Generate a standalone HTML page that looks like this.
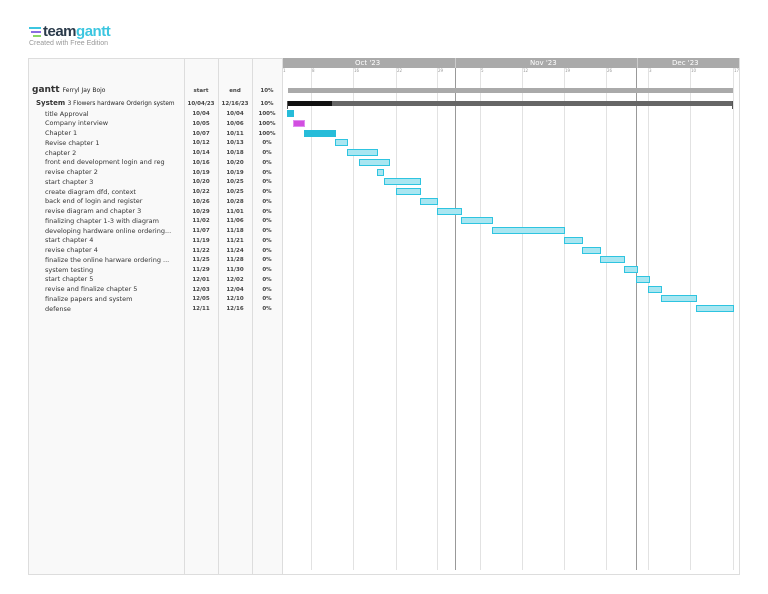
<!DOCTYPE html><html><head><style>
body{margin:0;width:768px;height:594px;background:#fff;position:relative;font-family:"DejaVu Sans","Liberation Sans",sans-serif;overflow:hidden}
.a{position:absolute}
.t{position:absolute;font-size:6.5px;color:#333;white-space:nowrap;line-height:8px}
.n{left:45px}
.c{text-align:center;font-size:5.5px;font-weight:bold;color:#444}
.b{position:absolute;height:5px;background:#a9e6f1;border:1px solid #2ec4e0}
.v{position:absolute;top:68px;height:502px;width:1px;background:#e2e2e2}
.m{background:#999}
</style></head><body>
<div class="a" style="left:29px;top:27px;width:12px;height:2px;background:#3cc6e0"></div>
<div class="a" style="left:31px;top:31px;width:10px;height:2px;background:#8a6de0"></div>
<div class="a" style="left:33px;top:35px;width:8px;height:2px;background:#8bd867"></div>
<div class="a" style="left:43px;top:23px;font-size:15px;font-weight:bold;color:#2a3a4a;font-family:'Liberation Sans',sans-serif;letter-spacing:-0.5px">team<span style="color:#3cc6e0">gantt</span></div>
<div class="a" style="left:29px;top:40px;font-size:7px;color:#999;font-family:'Liberation Sans',sans-serif">Created with Free Edition</div>
<div class="a" style="left:28px;top:58px;width:710px;height:515px;border:1px solid #ddd;background:#fff"></div>
<div class="a" style="left:29px;top:59px;width:253px;height:515px;background:#f9f9f9"></div>
<div class="a" style="left:184px;top:59px;width:1px;height:515px;background:#ddd"></div>
<div class="a" style="left:218px;top:59px;width:1px;height:515px;background:#ddd"></div>
<div class="a" style="left:252px;top:59px;width:1px;height:515px;background:#ddd"></div>
<div class="a" style="left:282px;top:59px;width:1px;height:515px;background:#ddd"></div>
<div class="a" style="left:283px;top:58px;width:456px;height:10px;background:#aaa"></div>
<div class="a" style="left:455px;top:58px;width:1px;height:10px;background:#ccc"></div>
<div class="a" style="left:637px;top:58px;width:1px;height:10px;background:#ccc"></div>
<div class="t" style="left:355px;top:59px;color:#fff;font-size:7px">Oct '23</div>
<div class="t" style="left:530px;top:59px;color:#fff;font-size:7px">Nov '23</div>
<div class="t" style="left:672px;top:59px;color:#fff;font-size:7px">Dec '23</div>
<div class="v" style="left:311px"></div><div class="v" style="left:353px"></div><div class="v" style="left:396px"></div><div class="v" style="left:437px"></div><div class="v m" style="left:455px"></div><div class="v" style="left:480px"></div><div class="v" style="left:522px"></div><div class="v" style="left:564px"></div><div class="v" style="left:606px"></div><div class="v m" style="left:636px"></div><div class="v" style="left:648px"></div><div class="v" style="left:690px"></div><div class="v" style="left:733px"></div>
<div class="t" style="left:283px;top:67px;font-size:4px;color:#999">1</div><div class="t" style="left:312px;top:67px;font-size:4px;color:#999">8</div><div class="t" style="left:354px;top:67px;font-size:4px;color:#999">16</div><div class="t" style="left:397px;top:67px;font-size:4px;color:#999">22</div><div class="t" style="left:438px;top:67px;font-size:4px;color:#999">29</div><div class="t" style="left:481px;top:67px;font-size:4px;color:#999">5</div><div class="t" style="left:523px;top:67px;font-size:4px;color:#999">12</div><div class="t" style="left:565px;top:67px;font-size:4px;color:#999">19</div><div class="t" style="left:607px;top:67px;font-size:4px;color:#999">26</div><div class="t" style="left:649px;top:67px;font-size:4px;color:#999">3</div><div class="t" style="left:691px;top:67px;font-size:4px;color:#999">10</div><div class="t" style="left:734px;top:67px;font-size:4px;color:#999">17</div>
<div class="t" style="left:32px;top:86px;font-size:9px;font-weight:bold;color:#333">gantt <span style="font-size:6px;font-weight:normal;color:#222">Ferryl Jay Bojo</span></div>
<div class="t c" style="left:184px;width:34px;top:87px">start</div><div class="t c" style="left:218px;width:34px;top:87px">end</div><div class="t c" style="left:252px;width:30px;top:87px">10%</div>
<div class="t" style="left:36px;top:99px;font-size:7px;font-weight:bold;color:#333">System <span style="font-size:5.8px;font-weight:normal;color:#222">3 Flowers hardware Orderign system</span></div>
<div class="t c" style="left:184px;width:34px;top:100px">10/04/23</div><div class="t c" style="left:218px;width:34px;top:100px">12/16/23</div><div class="t c" style="left:252px;width:30px;top:100px">10%</div>
<div class="a" style="left:288px;top:88px;width:445px;height:5px;background:#aaa"></div>
<div class="a" style="left:288px;top:101px;width:445px;height:5px;background:#666"></div>
<div class="a" style="left:288px;top:101px;width:44px;height:5px;background:#111"></div>
<div class="a" style="left:287px;top:101px;width:1px;height:8px;background:#555"></div>
<div class="a" style="left:732px;top:101px;width:1px;height:8px;background:#555"></div>
<div id="rows"></div>
<script>
var d=[["title Approval","10/04","10/04","100%",287,294,"s"],["Company interview","10/05","10/06","100%",293,305,"p"],["Chapter 1","10/07","10/11","100%",304,336,"s"],["Revise chapter 1","10/12","10/13","0%",335,348],["chapter 2","10/14","10/18","0%",347,378],["front end development login and reg","10/16","10/20","0%",359,390],["revise chapter 2","10/19","10/19","0%",377,384],["start chapter 3","10/20","10/25","0%",384,421],["create diagram dfd, context","10/22","10/25","0%",396,421],["back end of login and register","10/26","10/28","0%",420,438],["revise diagram  and chapter 3","10/29","11/01","0%",437,462],["finalizing chapter 1-3 with diagram","11/02","11/06","0%",461,493],["developing hardware online ordering...","11/07","11/18","0%",492,565],["start chapter 4","11/19","11/21","0%",564,583],["revise chapter 4","11/22","11/24","0%",582,601],["finalize the online harware ordering ...","11/25","11/28","0%",600,625],["system testing","11/29","11/30","0%",624,638],["start chapter 5","12/01","12/02","0%",636,650],["revise and finalize chapter 5","12/03","12/04","0%",648,662],["finalize papers and system","12/05","12/10","0%",661,697],["defense","12/11","12/16","0%",696,734]];
var h="";d.forEach(function(r,i){var y=109.5+i*9.75;
h+='<div class="t n" style="top:'+y+'px">'+r[0]+'</div><div class="t c" style="left:184px;width:34px;top:'+(y+0.5)+'px">'+r[1]+'</div><div class="t c" style="left:218px;width:34px;top:'+(y+0.5)+'px">'+r[2]+'</div><div class="t c" style="left:252px;width:30px;top:'+(y+0.5)+'px">'+r[3]+'</div>';
var st=r[6]=="s"?"background:#26bcd9;border-color:#26bcd9;":r[6]=="p"?"background:#d24ee0;border-color:#e08cf0;":"";
h+='<div class="b" style="'+st+'left:'+r[4]+'px;width:'+(r[5]-r[4]-2)+'px;top:'+(y+0.5)+'px"></div>';});
document.getElementById("rows").innerHTML=h;
</script>
</body></html>
